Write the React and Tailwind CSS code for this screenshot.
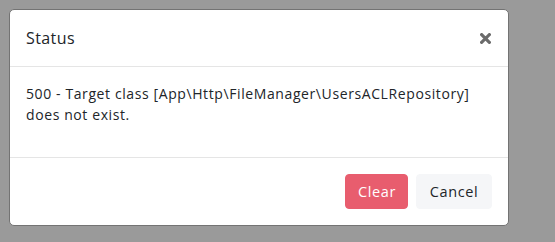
export default function App() {
  return (
    <div className="w-[555px] h-[242px] bg-[#9a9a9a] pt-[9px] pl-[9px] overflow-hidden" style={{ fontFamily: '"Open Sans", "Liberation Sans", sans-serif' }}>
      <div className="w-[500px] bg-white border border-[#737373] rounded-[5px] text-[#212529]">
        {/* Header */}
        <div className="flex items-center justify-between px-4 py-4 border-b border-[#e5e5e5]">
          <h5 className="text-[16px] leading-6 tracking-[0.4px]">Status</h5>
          <button className="text-[#6b6b6b] w-[11px] h-[11px] mr-[1px]">
            <svg viewBox="0 0 10 10" className="w-[11px] h-[11px]">
              <path d="M1.5 1.5 L8.5 8.5 M8.5 1.5 L1.5 8.5" stroke="currentColor" strokeWidth="2.8" strokeLinecap="square" />
            </svg>
          </button>
        </div>

        {/* Body */}
        <div className="p-4 border-b border-[#e5e5e5]">
          <p className="text-[14px] leading-[21px] mb-4 tracking-[0.6px]">
            500 - Target class [App\Http\FileManager\UsersACLRepository] does not exist.
          </p>
        </div>

        {/* Footer */}
        <div className="flex justify-end gap-2 p-4">
          <button className="bg-[#e85d6e] text-white text-[14.5px] leading-[21px] tracking-[0.6px] px-3 py-[6px] w-[63px] rounded-[4px] border border-[#e85d6e]">Clear</button>
          <button className="bg-[#f5f6f8] text-[#212529] text-[14.5px] leading-[21px] tracking-[0.6px] px-3 py-[6px] w-[76px] rounded-[4px] border border-[#f5f6f8]">Cancel</button>
        </div>
      </div>
    </div>
  );
}
